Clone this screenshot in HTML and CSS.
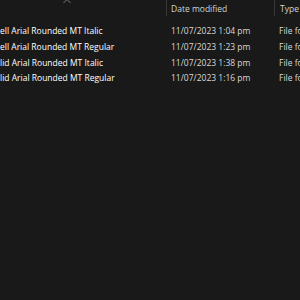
FILE: index.html
```html
<!DOCTYPE html>
<html>
<head><link rel="stylesheet" href="styles.css"></head>
<body>
<div class="list">
  <div class="header">
    <div class="hcell name-h"><svg class="caret" width="8" height="5" viewBox="0 0 8 5"><path d="M0.5 4 L4 0.5 L7.5 4" fill="none" stroke="#7a7a7a" stroke-width="1"/></svg></div>
    <div class="hcell date-h">Date modified</div>
    <div class="hcell type-h">Type</div>
  </div>
  <div class="rows">
    <div class="row"><span class="name">ell Arial Rounded MT Italic</span><span class="date">11/07/2023 1:04 pm</span><span class="type">File fo</span></div>
    <div class="row"><span class="name">ell Arial Rounded MT Regular</span><span class="date">11/07/2023 1:23 pm</span><span class="type">File fo</span></div>
    <div class="row"><span class="name">lid Arial Rounded MT Italic</span><span class="date">11/07/2023 1:38 pm</span><span class="type">File fo</span></div>
    <div class="row"><span class="name">lid Arial Rounded MT Regular</span><span class="date">11/07/2023 1:16 pm</span><span class="type">File fo</span></div>
  </div>
</div>
</body>
</html>
```
FILE: styles.css
```css
html, body { margin: 0; padding: 0; background: #191919; width: 300px; height: 300px; overflow: hidden; }
body { font-family: "Open Sans", sans-serif; font-size: 8.5px; font-weight: 500; color: #fff; }
.header { display: grid; grid-template-columns: 166px 108px 1fr; height: 16px; }
.hcell { height: 16px; display: flex; align-items: center; color: #d4d4d4; white-space: nowrap; overflow: hidden; }
.name-h { padding-left: 63px; align-items: flex-start; }
.date-h, .type-h { border-left: 1px solid #383838; padding-left: 4px; }
.type-h { padding-left: 5px; }
.caret { display: block; margin-top: -1px; }
.rows { padding-top: 7px; }
.row { display: grid; grid-template-columns: 166px 108px 1fr; height: 15.7px; align-items: center; white-space: nowrap; overflow: hidden; }
.name { color: #fff; overflow: hidden; }
.date { color: #d8d8d8; padding-left: 5px; }
.type { color: #d8d8d8; padding-left: 5px; overflow: hidden; }
```
